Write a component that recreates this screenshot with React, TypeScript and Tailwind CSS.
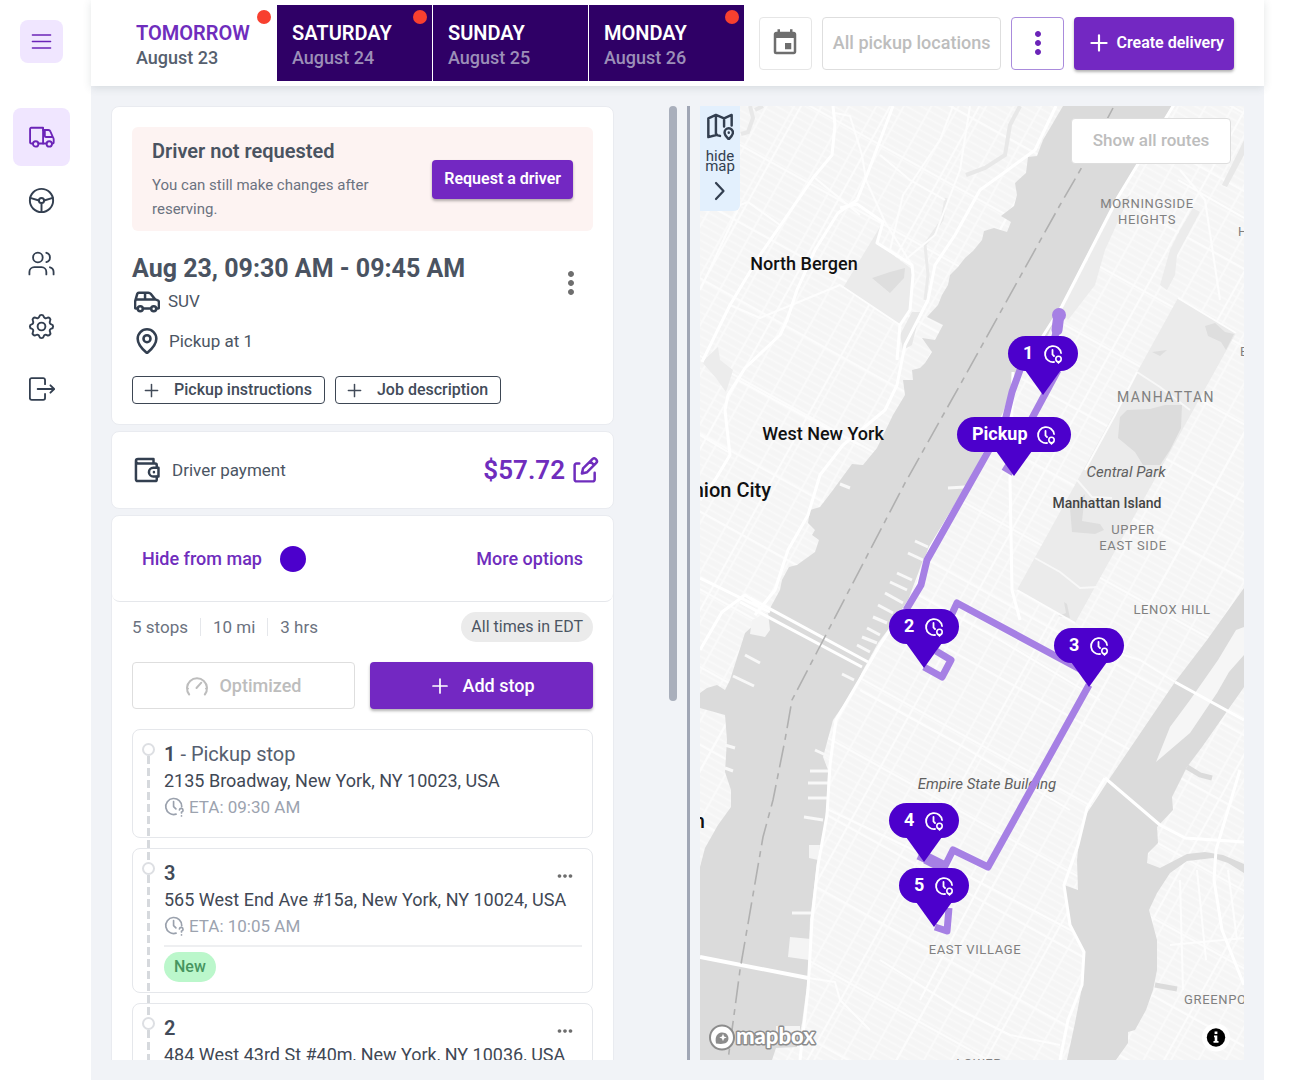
import type { ReactNode } from "react";
import { MapPin, Plus, Users } from "lucide-react";
import { MdEvent, MdMoreVert, MdMoreHoriz } from "react-icons/md";
import { TbSettings, TbSteeringWheel } from "react-icons/tb";

const days = [
  { name: "TOMORROW", date: "August 23", alert: true, active: true },
  { name: "SATURDAY", date: "August 24", alert: true },
  { name: "SUNDAY", date: "August 25", alert: false },
  { name: "MONDAY", date: "August 26", alert: true },
];

const stops = [
  { num: "1", label: " - Pickup stop", address: "2135 Broadway, New York, NY 10023, USA", eta: "09:30 AM" },
  { num: "3", address: "565 West End Ave #15a, New York, NY 10024, USA", eta: "10:05 AM", isNew: true, menu: true },
  { num: "2", address: "484 West 43rd St #40m, New York, NY 10036, USA", eta: "10:20 AM", isNew: true, menu: true },
];

const pins = [
  { label: "1", x: 1043, y: 395, w: 70 },
  { label: "Pickup", x: 1014, y: 476, w: 114 },
  { label: "2", x: 924, y: 668, w: 70 },
  { label: "3", x: 1089, y: 687, w: 70 },
  { label: "4", x: 924, y: 862, w: 70 },
  { label: "5", x: 934, y: 927, w: 70 },
];

type IconProps = { className?: string; children?: ReactNode; strokeWidth?: number };

function Icon({ className, children, strokeWidth = 1.5 }: IconProps) {
  return (
    <svg
      viewBox="0 0 24 24"
      fill="none"
      stroke="currentColor"
      strokeWidth={strokeWidth}
      strokeLinecap="round"
      strokeLinejoin="round"
      className={className}
      aria-hidden="true"
    >
      {children}
    </svg>
  );
}

function TruckIcon() {
  return (
    <Icon className="size-[26px]" strokeWidth={1.7}>
      <path d="M3.6 18H2a1 1 0 0 1-1-1V4.500a1 1 0 0 1 1-1h11V18H8.700" />
      <path d="M13 5.500h4.800a2 2 0 0 1 1.900 1.300L22 12a4 4 0 0 1 .8 2.400V17a1 1 0 0 1-1 1h-.6M16.200 18H13M22 12h-6.400a1 1 0 0 1-1-1V5.500" />
      <circle cx="6.200" cy="18.400" r="2.500" />
      <circle cx="18.700" cy="18.400" r="2.500" />
    </Icon>
  );
}

function LogoutIcon() {
  return (
    <Icon className="size-[26px]" strokeWidth={1.7}>
      <path d="M14.800 7.500V3.700a1.700 1.700 0 0 0-1.700-1.700H2.500A1.700 1.700 0 0 0 .8 3.700v16.600A1.700 1.700 0 0 0 2.500 22h10.600a1.700 1.700 0 0 0 1.700-1.700v-3.800" />
      <path d="M8 12h15.200M19.800 8.600l3.400 3.400-3.400 3.400" />
    </Icon>
  );
}

function CarIcon() {
  return (
    <Icon className="size-[26px] text-[#333f50]" strokeWidth={2.3}>
      <path d="M3.200 19H2a1 1 0 0 1-1-1v-5.500l2-7A1.600 1.600 0 0 1 4.500 4.300h8.700a3 3 0 0 1 2.200 1L19.500 10.500l2 .7a2 2 0 0 1 1.500 1.900V18a1 1 0 0 1-1 1h-.8M15.600 19H8.400M1.500 10.700h18M10.200 4.500v6" />
      <circle cx="5.800" cy="19.200" r="2.300" />
      <circle cx="18.200" cy="19.200" r="2.300" />
    </Icon>
  );
}

function WalletIcon() {
  return (
    <Icon className="size-[26px] text-[#333f50]" strokeWidth={2.3}>
      <path d="M21 9.500V7.500a1.500 1.500 0 0 0-1.500-1.500H4a2.200 2.200 0 0 1-2.200-2.200A1.900 1.900 0 0 1 3.700 1.900H18v4M1.800 4v16.500A1.700 1.700 0 0 0 3.500 22.200h16A1.500 1.500 0 0 0 21 20.700v-2.500" />
      <path d="M22.600 10h-4.800a4 4 0 0 0 0 8h4.800zM18.400 13.900v.1" />
    </Icon>
  );
}

function EditIcon() {
  return (
    <Icon className="size-[26px]" strokeWidth={2.3}>
      <path d="M20 14.500v6.300a1.700 1.700 0 0 1-1.700 1.700H3.200a1.700 1.700 0 0 1-1.700-1.700V7.700A1.700 1.700 0 0 1 3.200 6h2.600" />
      <path d="m13 14-4.800 1.200L9.300 10.500l8.400-8.400a2.500 2.500 0 0 1 3.600 3.600zM16 4l3.500 3.500" />
    </Icon>
  );
}

function GaugeIcon() {
  return (
    <Icon className="size-6" strokeWidth={2}>
      <path d="M4.200 20.500A10 10 0 1 1 19.800 20.500M2 14.500h1M21 14.500h1M11.500 14l4.800-5.300" />
    </Icon>
  );
}

function EtaIcon() {
  return (
    <Icon className="size-5 text-[#9aa1ad]" strokeWidth={2}>
      <path d="M14.500 20.600a9.600 9.600 0 1 1 6.800-9M11.500 5.500v6l2.800 2.800" />
      <path d="M18.500 15.500a2.200 2.200 0 1 1 2.500 2.600v1M21 22.600v.1" />
    </Icon>
  );
}

function MapIcon() {
  return (
    <Icon className="size-7 text-[#333f50]" strokeWidth={2.1}>
      <path d="M9.500 19.500 2 21.500V5.500L8.500 2.500l7 3 6.500-3v9M8.500 2.500v17l3.500 1M15.500 5.500v7" />
      <path d="M19.500 14a3.600 3.600 0 0 0-3.600 3.600c0 2.200 3.600 5.800 3.600 5.800s3.600-3.600 3.600-5.800A3.600 3.600 0 0 0 19.500 14zM19.500 17.500v.3" />
    </Icon>
  );
}

function Sidebar() {
  const item = "flex h-[58px] w-[57px] items-center justify-center rounded-lg";
  return (
    <aside className="flex w-[91px] shrink-0 flex-col pt-5">
      <button aria-label="Menu" className="ml-5 flex size-[43px] items-center justify-center rounded-lg bg-[#f0e6ff] text-[#6b24b8]">
        <Icon className="size-[23px]">
          <path d="M2.500 5.200h19M2.500 12h19M2.500 18.800h19" />
        </Icon>
      </button>
      <nav className="mt-[45px] ml-[13px] flex flex-col gap-[5px] text-[#333f50]">
        <a href="#" aria-label="Deliveries" className={`${item} bg-[#f0e6ff] text-[#6b24b8]`}>
          <TruckIcon />
        </a>
        <a href="#" aria-label="Drivers" className={item}>
          <TbSteeringWheel className="size-[31px]" strokeWidth={1.5} />
        </a>
        <a href="#" aria-label="Customers" className={item}>
          <Users className="size-[29px]" strokeWidth={1.5} />
        </a>
        <a href="#" aria-label="Settings" className={item}>
          <TbSettings className="size-[31px]" strokeWidth={1.5} />
        </a>
        <a href="#" aria-label="Log out" className={item}>
          <LogoutIcon />
        </a>
      </nav>
    </aside>
  );
}

function Header() {
  return (
    <header className="relative z-10 flex h-[86px] shrink-0 items-center bg-white px-[30px] shadow-[0_2px_8px_rgba(60,80,90,0.15)]">
      <div className="flex gap-px">
        {days.map((day) => (
          <button
            key={day.name}
            className={`relative flex h-[76px] w-[155px] flex-col justify-center px-[15px] pt-1 text-left ${
              day.active ? "bg-white" : "bg-[#2f0066]"
            }`}
          >
            <span className={`text-xl leading-[26px] font-semibold ${day.active ? "text-[#6f2dbd]" : "text-white"}`}>{day.name}</span>
            <span className={`text-lg leading-6 font-medium ${day.active ? "text-[#56606e]" : "text-[#9c8fb8]"}`}>{day.date}</span>
            {day.alert && <span className="absolute top-[5px] right-[5px] size-3.5 rounded-full bg-[#f8402f]" />}
          </button>
        ))}
      </div>
      <div className="ml-auto flex items-center gap-2.5">
        <button aria-label="Pick a date" className="flex size-[53px] items-center justify-center rounded border border-[#e6e6e6] text-[#6e6e6e]">
          <MdEvent className="size-[30px]" />
        </button>
        <button className="h-[53px] rounded border border-[#dedede] px-2.5 text-lg font-medium text-[#bdbdbd]">
          All pickup locations
        </button>
        <button aria-label="More actions" className="flex size-[53px] items-center justify-center rounded border border-[#a98bdc] text-[#6b24b8]">
          <MdMoreVert className="size-9" />
        </button>
        <button className="flex h-[53px] items-center gap-1 rounded bg-[#7328c2] pr-2.5 pl-3 text-base font-semibold text-white shadow-[0_2px_3px_rgba(0,0,0,0.3)]">
          <Plus className="size-[26px]" strokeWidth={2} />
          Create delivery
        </button>
      </div>
    </header>
  );
}

const card = "rounded-lg border border-[#e9ebf0] bg-white";

function JobCard() {
  return (
    <section className={`${card} p-5`}>
      <div className="flex items-center justify-between rounded-md bg-[#fdf3f2] px-5 py-2.5">
        <div className="w-[240px]">
          <h2 className="text-xl leading-7 font-semibold text-[#4a5361]">Driver not requested</h2>
          <p className="mt-2 text-[15px] leading-6 text-[#6b7280]">You can still make changes after reserving.</p>
        </div>
        <button className="h-[39px] rounded bg-[#7328c2] px-3 text-base font-semibold text-white shadow-[0_2px_3px_rgba(0,0,0,0.3)]">
          Request a driver
        </button>
      </div>
      <div className="mt-5 flex items-center justify-between">
        <div>
          <h1 className="text-[25px] leading-9 font-bold text-[#4a5361]">Aug 23, 09:30 AM - 09:45 AM</h1>
          <p className="flex items-center gap-2 pl-0.5 text-[17px] leading-7 text-[#4b5563]">
            <CarIcon />
            SUV
          </p>
        </div>
        <button aria-label="Job menu" className="mr-1 text-[#6e6e6e]">
          <MdMoreVert className="size-9" />
        </button>
      </div>
      <p className="mt-3 flex items-center gap-2 pl-px text-[17px] leading-7 text-[#4b5563]">
        <MapPin className="size-7 text-[#333f50]" strokeWidth={2.2} />
        Pickup at 1
      </p>
      <div className="mt-[21px] flex gap-2.5">
        {["Pickup instructions", "Job description"].map((label) => (
          <button key={label} className="flex h-7 items-center gap-3 rounded border border-[#3d4654] pr-3 pl-2 text-base font-medium text-[#424b59]">
            <Plus className="size-[21px]" strokeWidth={1.7} />
            {label}
          </button>
        ))}
      </div>
    </section>
  );
}

function StopItem({ stop }: { stop: (typeof stops)[number] }) {
  return (
    <li className="relative rounded-lg border border-[#e5e7eb] pt-2.5 pr-2.5 pb-2.5 pl-[31px]">
      <span className="absolute top-[26px] -bottom-[30px] left-3.5 z-10 w-[3px] bg-[repeating-linear-gradient(to_bottom,#d6d9dd_0,#d6d9dd_8px,transparent_8px,transparent_12px)]" />
      <span className="absolute top-[13px] left-[9px] z-20 size-[13px] rounded-full border-2 border-[#dddfe3] bg-white" />
      <div className="flex items-center justify-between">
        <h3 className="text-xl leading-7 text-[#566070]">
          <b className="font-semibold text-[#424b59]">{stop.num}</b>
          {stop.label}
        </h3>
        {stop.menu && (
          <button aria-label={`Stop ${stop.num} menu`} className="pt-1.5 pr-1.5 text-[#6e6e6e]">
            <MdMoreHoriz className="size-[22px]" />
          </button>
        )}
      </div>
      <p className="text-lg leading-[26px] text-[#3f4855]">{stop.address}</p>
      <p className="flex items-center gap-[5px] text-[17px] leading-[26px] text-[#9ca3af]">
        <EtaIcon />
        ETA: {stop.eta}
      </p>
      {stop.isNew ? (
        <div className="mt-1.5 border-t-2 border-[#eeeff1] pt-[5px]">
          <span className="inline-block rounded-full bg-[#bbf7cb] px-2.5 text-base leading-[30px] font-medium text-[#479560]">New</span>
        </div>
      ) : (
        <div className="h-[7px]" />
      )}
    </li>
  );
}

function RouteCard() {
  return (
    <section className={card}>
      <div className="flex items-center justify-between rounded-lg border-b border-[#e5e7eb] px-[30px] py-7 text-lg leading-[29px] font-medium text-[#6f2dbd]">
        <div className="flex items-center gap-[18px]">
          <button>Hide from map</button>
          <span className="size-[26px] rounded-full bg-[#4c00cc]" />
        </div>
        <button>More options</button>
      </div>
      <div className="px-5 pt-2.5 text-lg">
        <div className="flex items-center justify-between">
          <div className="flex divide-x divide-[#e5e7eb] text-[17px] leading-[18px] text-[#6b7280]">
            <span className="pr-3">5 stops</span>
            <span className="px-3">10 mi</span>
            <span className="pl-3">3 hrs</span>
          </div>
          <span className="rounded-full bg-[#ebebeb] px-2.5 text-base leading-[30px] text-[#4b5563]">All times in EDT</span>
        </div>
        <div className="mt-5 grid grid-cols-2 gap-[15px]">
          <button disabled className="flex h-[47px] items-center justify-center gap-2.5 rounded border border-[#dedede] font-medium text-[#bdbdbd]">
            <GaugeIcon />
            Optimized
          </button>
          <button className="flex h-[47px] items-center justify-center gap-2.5 rounded bg-[#7328c2] font-medium text-white shadow-[0_2px_3px_rgba(0,0,0,0.3)]">
            <Plus className="size-6" strokeWidth={1.7} />
            Add stop
          </button>
        </div>
        <ul className="mt-5 flex flex-col gap-2.5">
          {stops.map((stop) => (
            <StopItem key={stop.num} stop={stop} />
          ))}
        </ul>
      </div>
    </section>
  );
}

// Shape, label and pin coordinates all share the canvas' own viewBox.
const hudson =
  "M1063 106 1043 140 1037 156 1028 157 1026 173 1015 183 1017 195 1014 206 1001 216 1011 222 1007 232 994 228 984 231 982 240 973 251 965 258 958 267 950 275 948 285 942 295 938 305 927 317 943 325 935 340 922 338 932 352 925 363 920 368 912 370 913 380 903 380 905 395 893 415 877 448 863 465 852 464 833 490 820 507 810 510 808 523 815 530 812 535 819 540 815 552 797 565 789 567 782 580 780 590 768 612 745 633 730 680 725 690 717 685 707 688 700 693V708L725 715 727 740 725 772 731 790 731 807 718 825 705 848 700 867V1060H772L776 1048 797 1047 802 1023 808 978 810 920 817 863 823 837 827 803 828 770 823 757 833 720 855 688 862 672 878 643 890 627 907 603 923 560 947 517 970 480 1003 412 1017 372 1048 335 1060 308 1117 197 1172 106Z";
const eastRiver =
  "M1244 588 1207 640 1175 682 1110 778 1097 798 1087 813 1080 833 1077 860 1078 890 1064 885 1067 910 1070 927 1084 952 1084 977 1075 1023 1067 1060H1116L1128 1043 1128 1032 1135 1030 1146 1010 1153 990 1157 970 1157 940 1149 910 1157 893 1170 873 1187 861 1213 858 1228 863 1244 873V864L1223 855 1205 852 1187 854 1160 868 1147 863 1148 853 1158 843 1157 827 1173 810 1172 797 1187 767 1202 747 1244 687Z";

const mainRoads = [
  "M833 106 835 125 832 155 813 178 760 255 730 305 702 362",
  "M893 106 867 175 857 200 838 213 815 250 797 290 787 320 780 335 745 368 728 395 725 410 730 455 715 480 700 500",
  "M840 208 857 204 883 222 877 243 912 265 913 275 910 310 900 325 897 360",
  "M1056 106 1035 150 1005 172 980 190 955 235 935 265 928 300 905 345 897 385 885 410 843 445 820 475 808 515 788 550 775 590 755 615",
  "M700 578 745 600 770 612M700 650 722 612 745 595 760 605",
  "M1178 98 1118 197 1062 306 1024 366 1002 420 970 482 930 548 915 592 880 645 836 720 830 765 827 815 818 865 812 920 808 990 800 1060",
  "M1013 372 1010 480 1012 590 1020 620",
  "M1175 682 1244 720",
  "M1105 778 1160 825 1185 838 1244 842",
  "M1240 770 1216 850 1214 880 1222 930 1244 985",
  "M1105 778 1087 808 1078 845 1064 885 1070 925 1084 952 1082 985 1068 1020 1060 1060",
];

const sideRoads = [
  "M835 113 850 116 862 155 866 180 885 222 912 265",
  "M748 202 740 205 700 290M748 202 780 225",
  "M700 435 728 452M730 305 760 318 840 285 900 325",
  "M815 178 860 215M738 380 830 430 860 445M880 155 910 180 945 200",
  "M970 106 960 170 935 235 905 260 890 250 903 195 940 140 953 106",
  "M1178 180 1244 218M1180 170 1205 200 1220 300",
  "M868 567 1000 640 1100 700M860 690 960 745 1070 810M808 800 960 872 1080 935",
  "M880 960 960 1010 1010 1035 1060 1045M808 978 835 982 840 1000 870 1030",
  "M1137 372 1115 415 1085 470M1017 590 1075 623M1178 298 1236 333",
  "M1075 640 1140 660 1175 682M990 866 920 1000M1180 880 1183 990M1197 870 1206 960M1228 870 1237 940M1170 945 1244 938",
];

const piers =
  "M915 541 928 547M908 553 923 560M897 573 912 580M890 582 907 590M885 593 903 603M878 605 893 613M873 617 887 623M867 628 880 635M862 637 877 643M857 645 870 652M745 655 760 663M733 676 754 686M842 674 854 680M815 750 830 757M810 771 829 771M808 783 828 783M808 798 828 798M804 817 823 820M792 913 812 913M965 487 948 488M840 484 850 488M725 745 735 748M725 768 733 771";

const areaLabels = [
  { text: "MORNINGSIDE", x: 1147, y: 208 },
  { text: "HEIGHTS", x: 1147, y: 224 },
  { text: "UPPER", x: 1133, y: 534 },
  { text: "EAST SIDE", x: 1133, y: 550 },
  { text: "LENOX HILL", x: 1172, y: 614 },
  { text: "EAST VILLAGE", x: 975, y: 954 },
  { text: "LOWER", x: 979, y: 1068 },
];

function Pin({ label, x, y, w }: (typeof pins)[number]) {
  return (
    <g transform={`translate(${x} ${y})`}>
      <path d="M-18-25h36L0 0z" fill="#4c00cc" />
      <rect x={-w / 2} y={-59} width={w} height={35} rx={17.5} fill="#4c00cc" />
      <text x={-w / 2 + 15} y={-36} className="fill-white text-[18px] font-bold">
        {label}
      </text>
      <g transform={`translate(${w / 2 - 25} -41)`} fill="none" stroke="#fff" strokeWidth="1.8" strokeLinecap="round">
        <path d="M1 8A8 8 0 1 1 8-1M-.5-4v4.500l1.500 1.500" />
        <circle cx="5.500" cy="5" r="2.700" strokeWidth="1.600" />
        <path d="M4 7.400 5.500 9l1.500-1.600" strokeWidth="1.500" />
      </g>
    </g>
  );
}

function RouteMap() {
  return (
    <svg viewBox="700 106 544 954" preserveAspectRatio="xMidYMid slice" className="size-full" role="img" aria-label="Route map">
      <defs>
        <pattern id="streets" width="24" height="7" patternUnits="userSpaceOnUse" patternTransform="rotate(29)">
          <path d="M0 3.500h24" stroke="#f9f9f9" strokeWidth="1.500" />
          <path d="M2 0v7" stroke="#fafafa" strokeWidth="2" />
        </pattern>
        <pattern id="blocks" width="78" height="68" patternUnits="userSpaceOnUse" patternTransform="rotate(29)">
          <path d="M0 40h78M50 0v68" stroke="#fcfcfc" strokeWidth="2" />
        </pattern>
      </defs>
      <rect x="700" y="106" width="544" height="954" fill="#f5f5f5" />
      <rect x="700" y="106" width="544" height="954" fill="url(#streets)" />
      <rect x="700" y="106" width="544" height="954" fill="url(#blocks)" />
      <path d="M883 222 843 288 900 325 910 310 913 270 877 243Z" fill="#ebebeb" />
      <path d="M1193 208 1180 230 1170 250 1160 285 1167 290 1175 275 1177 255 1200 212ZM1116 205 1080 275 1062 310 1068 320 1095 285 1105 250 1130 195Z" fill="#ececec" />
      <path d="M1244 140 1222 185 1227 187 1244 155ZM912 312 900 335 903 350 912 345 920 312Z" fill="#e8e8e8" />
      <path d="M750 106 753 118 748 132 741 134M755 110 763 106M966 175 985 168 1005 155 1010 125 1020 106" fill="none" stroke="#e8e8e8" strokeWidth="4" />
      <path d="M946 198 942 220 925 245 928 275 925 300" fill="none" stroke="#ebebeb" strokeWidth="3" />
      <path d="M702 362 718 347 720 360 733 370 726 392 716 378Z" fill="#ececec" />
      <path d="M1178 298 1236 333 1075 623 1017 590Z" fill="#ebebeb" />
      <path d="M1127 410 1150 409 1165 405 1182 405 1181 428 1170 450 1160 465 1143 465 1135 452 1118 438 1120 417Z" fill="#dcdcdc" />
      <path d="M1205 326 1215 323 1225 332 1234 334 1226 350 1221 342 1208 336ZM1152 352 1167 350 1160 356ZM872 278 890 272 905 268 904 278 890 293 884 288ZM1070 508 1085 494 1082 521 1100 524 1104 530 1095 534 1072 532ZM1067 604 1070 618 1058 616 1066 613 1064 602Z" fill="#dedede" />
      <path d="M1077 480 1092 497 1112 498M1035 558 1060 572 1080 588 1098 587M1137 372 1160 387 1190 410" fill="none" stroke="#f8f8f8" strokeWidth="2" />
      <g fill="none" stroke="#fdfdfd" strokeWidth="2" strokeLinejoin="round">
        {sideRoads.map((d) => (
          <path key={d} d={d} />
        ))}
      </g>
      <g fill="#dbdbdb">
        <path d={hudson} />
        <path d={eastRiver} />
        <path d="M1187 767 1200 775 1212 778M1155 985 1177 989" fill="none" stroke="#dbdbdb" strokeWidth="5" />
      </g>
      <path d="M1244 627 1236 630 1218 660 1190 700 1170 727 1156 762 1190 733 1217 693 1229 672 1244 655Z" fill="#f6f6f6" />
      <path d="M752 620 768 612 770 630 765 637 750 634ZM790 937 811 939 809 960 788 957ZM809 845 820 845 818 860 809 858ZM776 1026H800V1032H776Z" fill="#f4f4f4" />
      <path d={piers} fill="none" stroke="#f8f8f8" strokeWidth="3" />
      <g fill="none" stroke="#fff" strokeWidth="3" strokeLinejoin="round">
        {mainRoads.map((d) => (
          <path key={d} d={d} />
        ))}
        <path d="M740 602 862 667M750 598 868 662" />
        <path d="M700 957 808 978" strokeWidth="4" />
      </g>
      <path
        d="M1113 108 1082 167 1060 205 960 385 905 483 818 650 792 700 785 740 773 800 763 837 740 970 728 1060"
        fill="none"
        stroke="#b0b0b0"
        strokeWidth="1.600"
        strokeDasharray="22 6 6 6"
      />
      <g className="fill-[#111111] text-[18px] font-medium" textAnchor="middle">
        <text x="804" y="270">North Bergen</text>
        <text x="823" y="440">West New York</text>
      </g>
      <g className="fill-[#111111] text-[20px] font-medium" textAnchor="end">
        <text x="771" y="497">Union City</text>
        <text x="705" y="828">Hoboken</text>
      </g>
      <g className="fill-[#808080] text-[13px] tracking-wider" textAnchor="middle">
        {areaLabels.map((label) => (
          <text key={label.text} x={label.x} y={label.y}>
            {label.text}
          </text>
        ))}
        <text x="1184" y="1004" textAnchor="start">GREENPOINT</text>
        <text x="1238" y="236" textAnchor="start">HARLEM</text>
        <text x="1240" y="356" textAnchor="start">EAST</text>
      </g>
      <text x="1166" y="402" textAnchor="middle" className="fill-[#808080] text-[14px] tracking-widest">MANHATTAN</text>
      <text x="1107" y="508" textAnchor="middle" className="fill-[#444444] text-[14px] font-medium">Manhattan Island</text>
      <g className="fill-[#606060] text-[15px] italic" textAnchor="middle">
        <text x="1126" y="477">Central Park</text>
        <text x="987" y="789">Empire State Building</text>
      </g>
      <g fill="none" stroke="#a680e4" strokeWidth="7" strokeLinejoin="round">
        <path d="M1058 325 1054 340M1058 370 1030 422M1020 370 1012 392 1004 425M989 450 927 560 921 585 906 610" />
        <path d="M1059 314 1057 330" strokeWidth="11" strokeLinecap="round" />
        <path d="M1004 466 1014 472" strokeWidth="9" />
        <path d="M924 667 942 677 951 660 936 651M950 618 957 603 1089 674" />
        <path d="M1089 685 988 867 953 850 944 868 918 856" />
        <path d="M926 858 946 868" strokeWidth="12" />
        <path d="M949 908 947 931 935 927" />
      </g>
      <circle cx="1059" cy="315" r="7" fill="#a680e4" />
      {pins.map((pin) => (
        <Pin key={pin.label} {...pin} />
      ))}
      <g>
        <circle cx="722" cy="1037.500" r="12" fill="#fff" stroke="#8c8c8c" strokeWidth="2" />
        <path d="M716 1043.500c-.8-4-.5-7.500 2-9.500 3-2.200 7-1.800 9 .5s2 6-.5 8c-2.600 1.800-6.500 1.600-10.500 1z" fill="#8c8c8c" />
        <path d="m723 1033.800 1.100 2.600 2.600 1.100-2.600 1.100-1.100 2.600-1.100-2.600-2.600-1.100 2.600-1.100z" fill="#fff" />
        <text x="736" y="1044" paintOrder="stroke" stroke="#8c8c8c" strokeWidth="3" strokeLinejoin="round" className="fill-white font-['Lato'] text-[22px] font-black">
          mapbox
        </text>
      </g>
      <circle cx="1216" cy="1037.500" r="14" fill="#fff" />
      <circle cx="1216" cy="1037.500" r="9.200" fill="#000" />
      <path d="M1214 1035.500h3.300v5.500h1.200v1.800h-5v-1.800h1.200v-3.700h-.7zM1214.600 1031.500h2.800v2.500h-2.800z" fill="#fff" />
    </svg>
  );
}

export default function App() {
  return (
    <div className="flex h-screen overflow-hidden bg-white pr-[25px] font-['Roboto',sans-serif]">
      <Sidebar />
      <div className="flex min-w-0 flex-1 flex-col bg-[#f1f3f7]">
        <Header />
        <main className="grid min-h-0 flex-1 grid-cols-[579fr_544fr] gap-2.5 p-5">
          <div className="flex min-h-0 min-w-0">
            <div className="flex min-w-0 flex-1 flex-col gap-1.5 overflow-hidden">
              <JobCard />
              <section className={`${card} flex items-center justify-between py-5 pr-3.5 pl-[22px]`}>
                <div className="flex items-center gap-3 text-[17px] leading-9 text-[#4b5563]">
                  <WalletIcon />
                  Driver payment
                </div>
                <button className="flex items-center gap-2 text-[26px] leading-9 font-semibold text-[#6f2dbd]">
                  $57.72
                  <EditIcon />
                </button>
              </section>
              <RouteCard />
            </div>
            <div className="ml-[55px] h-[595px] w-2 shrink-0 rounded-full bg-[#a9afbc]" />
            <div className="ml-2.5 w-[3px] shrink-0 bg-[#a0a6b5]" />
          </div>
          <div className="relative min-w-0 overflow-hidden">
            <RouteMap />
            <button className="absolute top-0 left-0 flex h-[105px] w-10 flex-col items-center rounded-br-md bg-[#e3f0fd] pt-1.5 text-[#333f50]">
              <MapIcon />
              <span className="mt-[11px] text-[15px] leading-2.5">
                hide
                <br />
                map
              </span>
              <Icon className="mt-2 size-6" strokeWidth={2.2}>
                <path d="m8 4 7.500 8L8 20" />
              </Icon>
            </button>
            <button className="absolute top-3 right-[13px] h-[46px] w-40 rounded border border-[#dedede] bg-white text-[17px] font-medium text-[#bdbdbd]">
              Show all routes
            </button>
          </div>
        </main>
      </div>
    </div>
  );
}
